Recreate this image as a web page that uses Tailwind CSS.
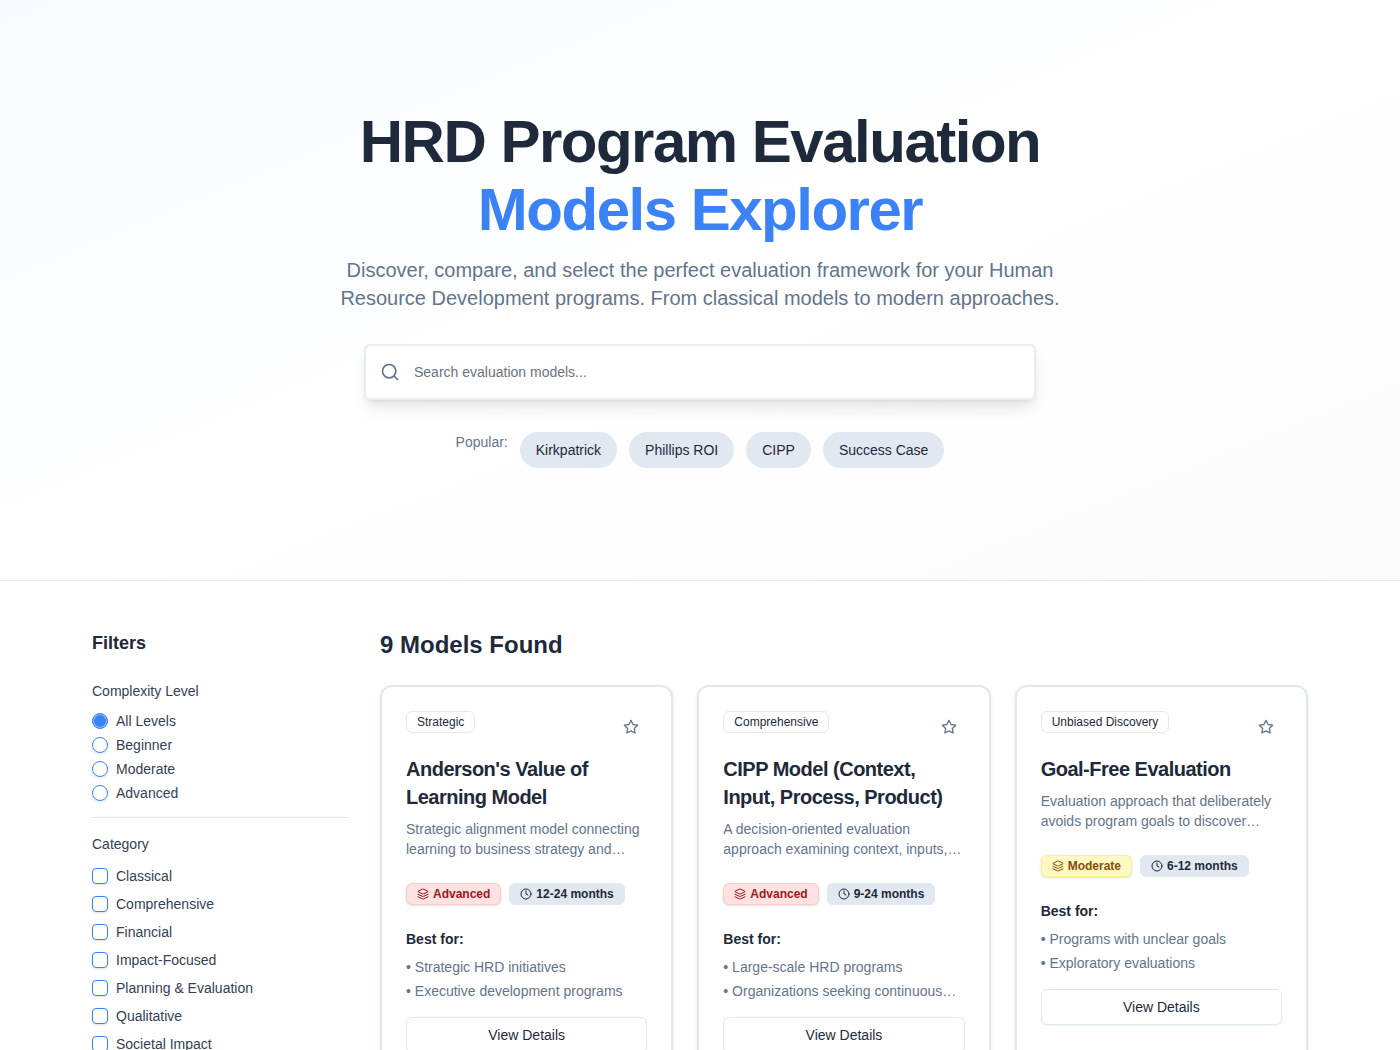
<!DOCTYPE html>
<html lang="en">
<head>
  <meta charset="UTF-8" />
  <title>HRD Program Evaluation Models Explorer</title>
  <script src="https://cdn.jsdelivr.net/npm/@tailwindcss/browser@4"></script>
</head>
<body class="bg-white text-[#1e293b] font-['Liberation_Sans',Arial,sans-serif]">
  <!-- hero -->
  <section class="h-[581px] border-b border-slate-200 bg-linear-to-br from-[#f6faff] via-white to-[#fbfbfb] pt-[108px] text-center">
    <h1 class="text-[60px] leading-[68px] font-bold tracking-tight">
      HRD Program Evaluation<br><span class="text-[#3b82f6]">Models Explorer</span>
    </h1>
    <p class="mx-auto mt-3 max-w-3xl text-xl leading-7 text-[#64748b]">
      Discover, compare, and select the perfect evaluation framework for your Human Resource Development programs. From classical models to modern approaches.
    </p>
    <div class="mx-auto mt-8 flex h-14 max-w-2xl items-center gap-3.5 rounded-md border-2 border-[#e8ebf2] bg-white pl-3.5 shadow-lg">
      <svg class="size-5 shrink-0 text-[#64748b]" viewBox="0 0 24 24" fill="none" stroke="currentColor" stroke-width="2" stroke-linecap="round" stroke-linejoin="round"><circle cx="11" cy="11" r="8"/><path d="m21 21-4.3-4.3"/></svg>
      <input class="w-full bg-transparent text-sm outline-none placeholder:text-[#6b7280]" placeholder="Search evaluation models..." type="text"/>
    </div>
    <div class="mt-8 flex items-start justify-center gap-3 text-sm">
      <span class="leading-5 text-[#64748b]">Popular:</span>
      <button class="rounded-full bg-slate-200 px-4 py-2 leading-5">Kirkpatrick</button>
      <button class="rounded-full bg-slate-200 px-4 py-2 leading-5">Phillips ROI</button>
      <button class="rounded-full bg-slate-200 px-4 py-2 leading-5">CIPP</button>
      <button class="rounded-full bg-slate-200 px-4 py-2 leading-5">Success Case</button>
    </div>
  </section>

  <main class="mx-auto flex max-w-[1216px] gap-8 pt-12">
    <!-- filters -->
    <aside class="w-64 shrink-0 text-sm text-[#334155]">
      <h3 class="text-lg leading-7 font-semibold text-[#1e293b]">Filters</h3>
      <h4 class="mt-6 leading-5">Complexity Level</h4>
      <div class="mt-2.5 flex flex-col gap-1">
        <label class="flex h-5 items-center gap-2"><input type="radio" name="level" checked class="size-4 appearance-none rounded-full border border-[#3b82f6] shadow-sm checked:bg-[#3b82f6] checked:shadow-[inset_0_0_0_1px_rgba(255,255,255,0.5)]"/>All Levels</label>
        <label class="flex h-5 items-center gap-2"><input type="radio" name="level" class="size-4 appearance-none rounded-full border border-[#3b82f6] shadow-sm"/>Beginner</label>
        <label class="flex h-5 items-center gap-2"><input type="radio" name="level" class="size-4 appearance-none rounded-full border border-[#3b82f6] shadow-sm"/>Moderate</label>
        <label class="flex h-5 items-center gap-2"><input type="radio" name="level" class="size-4 appearance-none rounded-full border border-[#3b82f6] shadow-sm"/>Advanced</label>
      </div>
      <hr class="mt-3.5 border-slate-200"/>
      <h4 class="mt-4 leading-5">Category</h4>
      <div class="mt-3 flex flex-col gap-2">
        <label class="flex h-5 items-center gap-2"><input type="checkbox" class="size-4 appearance-none rounded border border-[#3b82f6] shadow-sm"/>Classical</label>
        <label class="flex h-5 items-center gap-2"><input type="checkbox" class="size-4 appearance-none rounded border border-[#3b82f6] shadow-sm"/>Comprehensive</label>
        <label class="flex h-5 items-center gap-2"><input type="checkbox" class="size-4 appearance-none rounded border border-[#3b82f6] shadow-sm"/>Financial</label>
        <label class="flex h-5 items-center gap-2"><input type="checkbox" class="size-4 appearance-none rounded border border-[#3b82f6] shadow-sm"/>Impact-Focused</label>
        <label class="flex h-5 items-center gap-2"><input type="checkbox" class="size-4 appearance-none rounded border border-[#3b82f6] shadow-sm"/>Planning &amp; Evaluation</label>
        <label class="flex h-5 items-center gap-2"><input type="checkbox" class="size-4 appearance-none rounded border border-[#3b82f6] shadow-sm"/>Qualitative</label>
        <label class="flex h-5 items-center gap-2"><input type="checkbox" class="size-4 appearance-none rounded border border-[#3b82f6] shadow-sm"/>Societal Impact</label>
      </div>
    </aside>

    <!-- results -->
    <section class="min-w-0 flex-1">
      <h2 class="text-2xl leading-8 font-semibold">9 Models Found</h2>
      <div class="mt-6 grid grid-cols-3 gap-6">

        <article class="rounded-xl border-2 border-slate-200 bg-white p-6 shadow-sm">
          <div class="flex items-start justify-between">
            <span class="rounded-md border border-slate-200 px-2.5 py-0.5 text-xs leading-4">Strategic</span>
            <svg class="mt-2 mr-2 size-4 text-[#64748b]" viewBox="0 0 24 24" fill="none" stroke="currentColor" stroke-width="2" stroke-linecap="round" stroke-linejoin="round"><polygon points="12 2 15.09 8.26 22 9.27 17 14.14 18.18 21.02 12 17.77 5.82 21.02 7 14.14 2 9.27 8.91 8.26 12 2"/></svg>
          </div>
          <h3 class="mt-5 text-xl leading-7 font-semibold tracking-tight">Anderson's Value of Learning Model</h3>
          <p class="mt-2 line-clamp-2 text-sm leading-5 text-[#64748b]">Strategic alignment model connecting learning to business strategy and organizational outcomes.</p>
          <div class="mt-6 flex gap-2 text-xs leading-4 font-semibold">
            <span class="flex items-center gap-1 rounded-md border border-[#fecaca] bg-[#fee2e2] px-2.5 py-0.5 text-[#991b1b] shadow-sm"><svg class="size-3" viewBox="0 0 24 24" fill="none" stroke="currentColor" stroke-width="2" stroke-linecap="round" stroke-linejoin="round"><path d="m12.83 2.18a2 2 0 0 0-1.66 0L2.6 6.08a1 1 0 0 0 0 1.83l8.58 3.91a2 2 0 0 0 1.66 0l8.58-3.9a1 1 0 0 0 0-1.83Z"/><path d="m22 17.65-9.17 4.16a2 2 0 0 1-1.66 0L2 17.65"/><path d="m22 12.65-9.17 4.16a2 2 0 0 1-1.66 0L2 12.65"/></svg>Advanced</span>
            <span class="flex items-center gap-1 rounded-md border border-slate-200 bg-slate-200 px-2.5 py-0.5"><svg class="size-3" viewBox="0 0 24 24" fill="none" stroke="currentColor" stroke-width="2" stroke-linecap="round" stroke-linejoin="round"><circle cx="12" cy="12" r="10"/><polyline points="12 6 12 12 16 14"/></svg>12-24 months</span>
          </div>
          <h4 class="mt-6 text-sm leading-5 font-semibold">Best for:</h4>
          <ul class="mt-1.5 text-sm leading-6 text-[#64748b]">
            <li class="line-clamp-1">• Strategic HRD initiatives</li>
            <li class="line-clamp-1">• Executive development programs</li>
          </ul>
          <button class="mt-3.5 h-9 w-full rounded-md border border-slate-200 bg-white text-sm shadow-xs">View Details</button>
        </article>

        <article class="rounded-xl border-2 border-slate-200 bg-white p-6 shadow-sm">
          <div class="flex items-start justify-between">
            <span class="rounded-md border border-slate-200 px-2.5 py-0.5 text-xs leading-4">Comprehensive</span>
            <svg class="mt-2 mr-2 size-4 text-[#64748b]" viewBox="0 0 24 24" fill="none" stroke="currentColor" stroke-width="2" stroke-linecap="round" stroke-linejoin="round"><polygon points="12 2 15.09 8.26 22 9.27 17 14.14 18.18 21.02 12 17.77 5.82 21.02 7 14.14 2 9.27 8.91 8.26 12 2"/></svg>
          </div>
          <h3 class="mt-5 text-xl leading-7 font-semibold tracking-tight">CIPP Model (Context, Input, Process, Product)</h3>
          <p class="mt-2 line-clamp-2 text-sm leading-5 text-[#64748b]">A decision-oriented evaluation approach examining context, inputs, processes and products.</p>
          <div class="mt-6 flex gap-2 text-xs leading-4 font-semibold">
            <span class="flex items-center gap-1 rounded-md border border-[#fecaca] bg-[#fee2e2] px-2.5 py-0.5 text-[#991b1b] shadow-sm"><svg class="size-3" viewBox="0 0 24 24" fill="none" stroke="currentColor" stroke-width="2" stroke-linecap="round" stroke-linejoin="round"><path d="m12.83 2.18a2 2 0 0 0-1.66 0L2.6 6.08a1 1 0 0 0 0 1.83l8.58 3.91a2 2 0 0 0 1.66 0l8.58-3.9a1 1 0 0 0 0-1.83Z"/><path d="m22 17.65-9.17 4.16a2 2 0 0 1-1.66 0L2 17.65"/><path d="m22 12.65-9.17 4.16a2 2 0 0 1-1.66 0L2 12.65"/></svg>Advanced</span>
            <span class="flex items-center gap-1 rounded-md border border-slate-200 bg-slate-200 px-2.5 py-0.5"><svg class="size-3" viewBox="0 0 24 24" fill="none" stroke="currentColor" stroke-width="2" stroke-linecap="round" stroke-linejoin="round"><circle cx="12" cy="12" r="10"/><polyline points="12 6 12 12 16 14"/></svg>9-24 months</span>
          </div>
          <h4 class="mt-6 text-sm leading-5 font-semibold">Best for:</h4>
          <ul class="mt-1.5 text-sm leading-6 text-[#64748b]">
            <li class="line-clamp-1">• Large-scale HRD programs</li>
            <li class="line-clamp-1">• Organizations seeking continuous improvement</li>
          </ul>
          <button class="mt-3.5 h-9 w-full rounded-md border border-slate-200 bg-white text-sm shadow-xs">View Details</button>
        </article>

        <article class="rounded-xl border-2 border-slate-200 bg-white p-6 shadow-sm">
          <div class="flex items-start justify-between">
            <span class="rounded-md border border-slate-200 px-2.5 py-0.5 text-xs leading-4">Unbiased Discovery</span>
            <svg class="mt-2 mr-2 size-4 text-[#64748b]" viewBox="0 0 24 24" fill="none" stroke="currentColor" stroke-width="2" stroke-linecap="round" stroke-linejoin="round"><polygon points="12 2 15.09 8.26 22 9.27 17 14.14 18.18 21.02 12 17.77 5.82 21.02 7 14.14 2 9.27 8.91 8.26 12 2"/></svg>
          </div>
          <h3 class="mt-5 text-xl leading-7 font-semibold tracking-tight">Goal-Free Evaluation</h3>
          <p class="mt-2 line-clamp-2 text-sm leading-5 text-[#64748b]">Evaluation approach that deliberately avoids program goals to discover unintended outcomes and effects.</p>
          <div class="mt-6 flex gap-2 text-xs leading-4 font-semibold">
            <span class="flex items-center gap-1 rounded-md border border-[#fef08a] bg-[#fef9c3] px-2.5 py-0.5 text-[#854d0e] shadow-sm"><svg class="size-3" viewBox="0 0 24 24" fill="none" stroke="currentColor" stroke-width="2" stroke-linecap="round" stroke-linejoin="round"><path d="m12.83 2.18a2 2 0 0 0-1.66 0L2.6 6.08a1 1 0 0 0 0 1.83l8.58 3.91a2 2 0 0 0 1.66 0l8.58-3.9a1 1 0 0 0 0-1.83Z"/><path d="m22 17.65-9.17 4.16a2 2 0 0 1-1.66 0L2 17.65"/><path d="m22 12.65-9.17 4.16a2 2 0 0 1-1.66 0L2 12.65"/></svg>Moderate</span>
            <span class="flex items-center gap-1 rounded-md border border-slate-200 bg-slate-200 px-2.5 py-0.5"><svg class="size-3" viewBox="0 0 24 24" fill="none" stroke="currentColor" stroke-width="2" stroke-linecap="round" stroke-linejoin="round"><circle cx="12" cy="12" r="10"/><polyline points="12 6 12 12 16 14"/></svg>6-12 months</span>
          </div>
          <h4 class="mt-6 text-sm leading-5 font-semibold">Best for:</h4>
          <ul class="mt-1.5 text-sm leading-6 text-[#64748b]">
            <li class="line-clamp-1">• Programs with unclear goals</li>
            <li class="line-clamp-1">• Exploratory evaluations</li>
          </ul>
          <button class="mt-3.5 h-9 w-full rounded-md border border-slate-200 bg-white text-sm shadow-xs">View Details</button>
        </article>

      </div>
    </section>
  </main>
</body>
</html>
